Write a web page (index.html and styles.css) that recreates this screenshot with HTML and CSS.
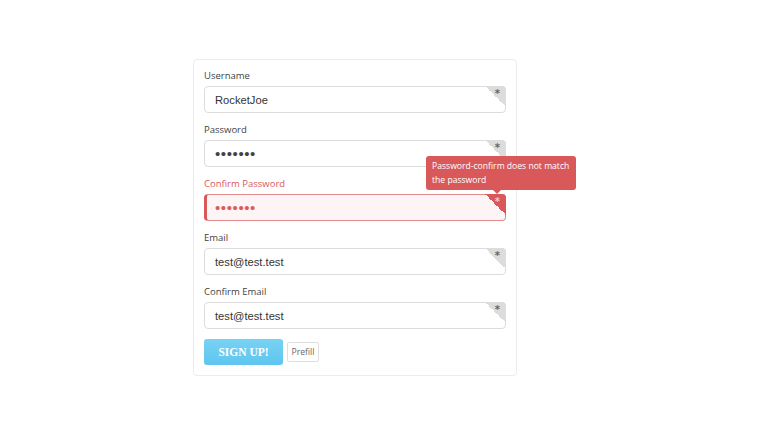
FILE: index.html
```html
<!DOCTYPE html>
<html>
<head>
<meta charset="utf-8">
<link rel="stylesheet" href="styles.css">
</head>
<body>
<div class="page">
  <form class="card">
    <div class="group">
      <label class="label">Username</label>
      <div class="field">
        <div class="value">RocketJoe</div>
        <span class="corner"><span class="star">*</span></span>
      </div>
    </div>
    <div class="group">
      <label class="label">Password</label>
      <div class="field">
        <div class="value dots">•••••••</div>
        <span class="corner"><span class="star">*</span></span>
      </div>
    </div>
    <div class="group error">
      <label class="label">Confirm Password</label>
      <div class="field">
        <div class="value dots">•••••••</div>
        <span class="corner"><span class="star">*</span></span>
        <div class="tooltip">Password-confirm does not match the password</div>
      </div>
    </div>
    <div class="group">
      <label class="label">Email</label>
      <div class="field">
        <div class="value">test@test.test</div>
        <span class="corner"><span class="star">*</span></span>
      </div>
    </div>
    <div class="group">
      <label class="label">Confirm Email</label>
      <div class="field">
        <div class="value">test@test.test</div>
        <span class="corner"><span class="star">*</span></span>
      </div>
    </div>
    <div class="actions">
      <button type="button" class="btn-signup">SIGN UP!</button>
      <button type="button" class="btn-prefill">Prefill</button>
    </div>
  </form>
</div>
</body>
</html>
```

FILE: styles.css
```css
html, body {
  margin: 0;
  padding: 0;
  background: #fff;
}
.page {
  padding: 59px 0 0 193px;
}
.card {
  width: 302px;
  border: 1px solid #ececec;
  border-radius: 4px;
  padding: 9px 10px 10px 10px;
  display: flex;
  flex-direction: column;
}
.group {
  display: flex;
  flex-direction: column;
  margin-bottom: 10px;
}
.label {
  font-family: "Open Sans", "Noto Sans", sans-serif;
  font-size: 9.5px;
  line-height: 14px;
  color: #3f3f3f;
  margin-bottom: 3px;
}
.field {
  position: relative;
  height: 25px;
  border: 1px solid #dcdcdc;
  border-radius: 4px;
  background: #fff;
  display: flex;
  align-items: center;
  padding-left: 10px;
}
.value {
  font-family: "Liberation Sans", Arial, sans-serif;
  font-size: 11.2px;
  color: #333;
}
.dots {
  font-size: 15px;
  letter-spacing: 0.6px;
  color: #444;
  line-height: 1;
  margin-top: -1px;
}
.corner {
  position: absolute;
  top: -1px;
  right: -1px;
  width: 21px;
  height: 21px;
  border-top-right-radius: 4px;
  background: linear-gradient(45deg, transparent 50%, #dcdcdc 50%);
}
.star {
  position: absolute;
  right: 6px;
  top: 3px;
  font-family: "DejaVu Sans", sans-serif;
  font-size: 10px;
  line-height: 10px;
  font-weight: bold;
  color: #666;
}
.error .label {
  color: #d9595a;
}
.error .field {
  background: #fdf5f5;
  border-color: #e48a8b;
  border-left: 3px solid #d9595a;
  padding-left: 8px;
}
.error .dots {
  color: #e05a5a;
}
.error .corner {
  background: linear-gradient(45deg, transparent 50%, #d9595a 50%);
}
.error .star {
  color: #f5c6c6;
}
.tooltip {
  position: absolute;
  left: 219px;
  bottom: calc(100% + 5px);
  width: 138px;
  padding: 3px 6px;
  background: #d9595a;
  border-radius: 3px;
  color: #fff;
  font-family: "Open Sans", "Noto Sans", sans-serif;
  font-size: 8.6px;
  line-height: 14px;
}
.tooltip::after {
  content: "";
  position: absolute;
  left: 67px;
  bottom: -4px;
  border-left: 4px solid transparent;
  border-right: 4px solid transparent;
  border-top: 4px solid #d9595a;
}
.actions {
  display: flex;
  align-items: center;
  gap: 4px;
}
.btn-signup {
  width: 79px;
  height: 26px;
  border: none;
  border-radius: 3px;
  background: linear-gradient(#78d2f3, #5ec5ee);
  color: #fff;
  font-family: "Liberation Serif", serif;
  font-weight: bold;
  font-size: 11.5px;
  padding: 0;
}
.btn-prefill {
  height: 20px;
  width: 32px;
  padding: 0;
  border: 1px solid #dedede;
  border-radius: 2px;
  background: #fff;
  color: #666;
  font-family: "Open Sans", "Noto Sans", sans-serif;
  font-size: 8.6px;
}
```
